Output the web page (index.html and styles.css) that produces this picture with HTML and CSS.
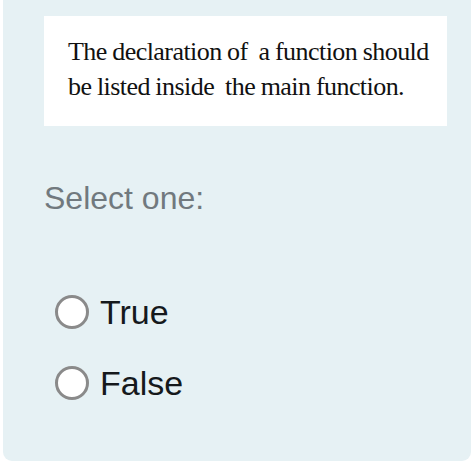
FILE: index.html
```html
<!DOCTYPE html>
<html>
<head>
<meta charset="utf-8">
<link rel="stylesheet" href="styles.css">
</head>
<body>
<div class="panel">
  <div class="question">
    <p class="qline">The declaration of &nbsp;a function should</p>
    <p class="qline">be listed inside &nbsp;the main function.</p>
  </div>
  <div class="prompt">Select one:</div>
  <div class="options">
    <label class="option"><span class="radio"></span><span class="label">True</span></label>
    <label class="option"><span class="radio"></span><span class="label">False</span></label>
  </div>
</div>
</body>
</html>
```
FILE: styles.css
```css
html, body {
  margin: 0;
  padding: 0;
  background: #ffffff;
}
body {
  width: 474px;
  height: 463px;
  overflow: hidden;
}
.panel {
  box-sizing: border-box;
  margin: 0 3px;
  width: 468px;
  height: 461px;
  background: #e6f1f4;
  border-radius: 0 0 9px 9px;
  padding: 16px 0 0 41px;
}
.question {
  box-sizing: border-box;
  width: 403px;
  height: 110px;
  background: #ffffff;
  padding: 18px 0 0 24px;
}
.qline {
  margin: 0;
  font-family: "Liberation Serif", "Times New Roman", serif;
  font-size: 26px;
  line-height: 35px;
  letter-spacing: -0.55px;
  word-spacing: -0.5px;
  color: #111111;
  white-space: nowrap;
}
.prompt {
  margin-top: 52px;
  font-family: "Liberation Sans", Arial, sans-serif;
  font-size: 32px;
  line-height: 40px;
  color: #71797e;
}
.options {
  margin-top: 74px;
  display: flex;
  flex-direction: column;
  gap: 31px;
}
.option {
  display: flex;
  align-items: center;
  height: 40px;
  gap: 11px;
  padding-left: 11px;
}
.radio {
  box-sizing: border-box;
  width: 34px;
  height: 34px;
  border: 3px solid #8a8a8a;
  border-radius: 50%;
  background: #ffffff;
  flex: none;
}
.label {
  font-family: "Liberation Sans", Arial, sans-serif;
  font-size: 34px;
  line-height: 40px;
  color: #15191c;
}
```
